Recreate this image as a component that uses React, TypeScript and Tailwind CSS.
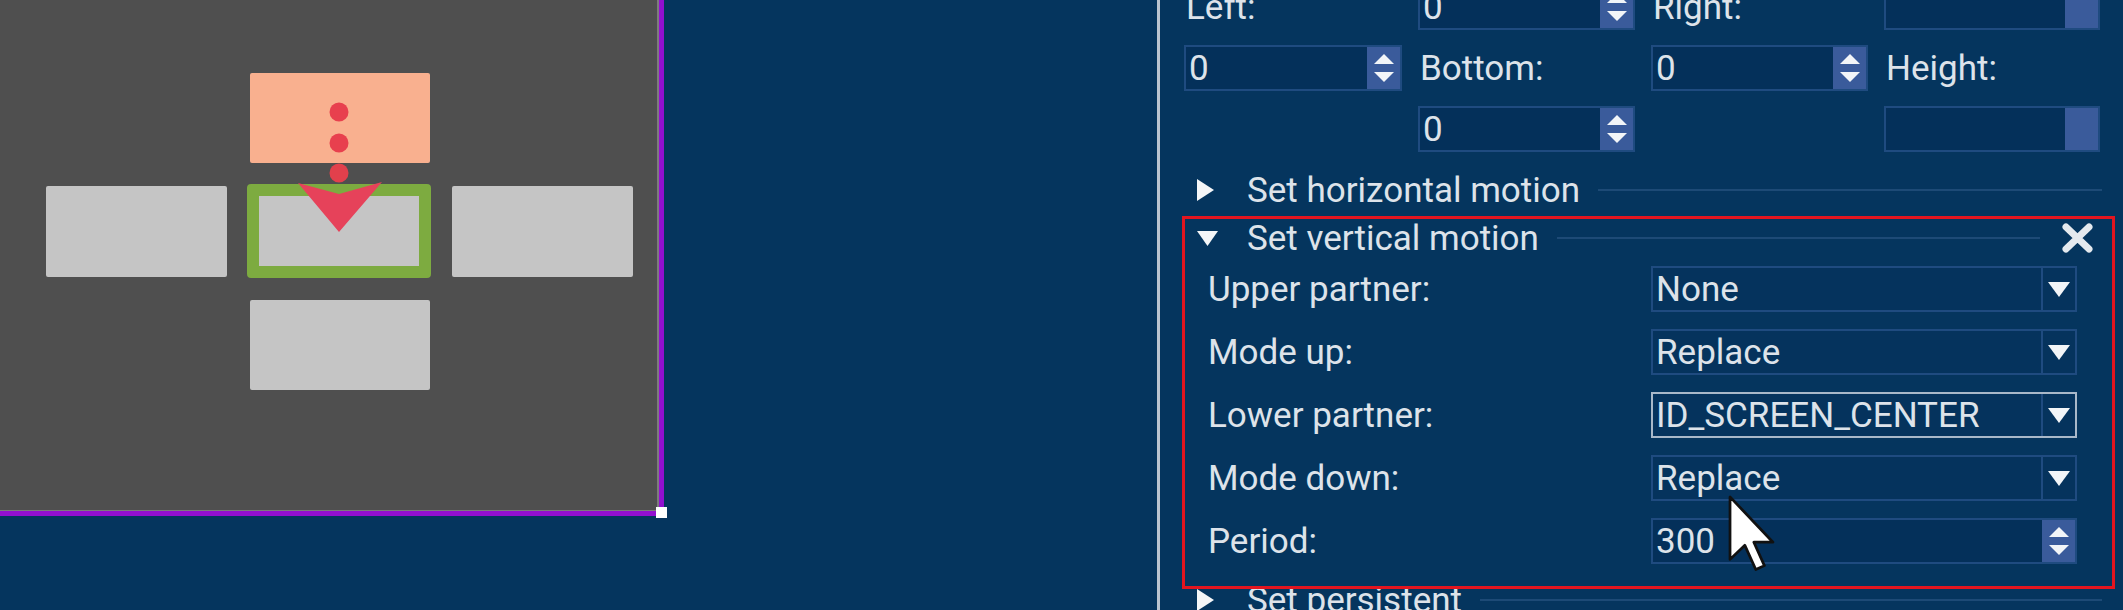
import type { ReactNode } from "react";

const TEXT = "text-[35px] leading-none text-[#dde3ea] whitespace-nowrap";

function ArrowUp() {
  return (
    <svg width="20" height="10" viewBox="0 0 20 10">
      <polygon points="10,0 20,10 0,10" fill="#f2f5f8" />
    </svg>
  );
}

function ArrowDown({ w = 20, h = 10 }: { w?: number; h?: number }) {
  return (
    <svg width={w} height={h} viewBox={`0 0 ${w} ${h}`}>
      <polygon points={`0,0 ${w},0 ${w / 2},${h}`} fill="#f2f5f8" />
    </svg>
  );
}

function SpinBox({ value, arrows = true }: { value?: string; arrows?: boolean }) {
  return (
    <div className="flex h-[46px] border-2 border-[#1f4b80] bg-[#04305a]">
      <div className={`flex flex-1 items-center pl-[3px] ${TEXT}`}>{value}</div>
      <div className="flex w-[33px] flex-col items-center justify-center gap-[8px] bg-[#3a5b9b]">
        {arrows && (
          <>
            <ArrowUp />
            <ArrowDown />
          </>
        )}
      </div>
    </div>
  );
}

function ComboBox({ value, focused = false }: { value: string; focused?: boolean }) {
  return (
    <div
      className={`flex h-[46px] border-2 bg-[#05335d] ${
        focused ? "border-[#a9b8c9]" : "border-[#1f4b80]"
      }`}
    >
      <div className={`flex flex-1 items-center pl-[3px] ${TEXT}`}>{value}</div>
      <div className="flex w-[34px] items-center justify-center border-l-2 border-[#1f4b80]">
        <ArrowDown w={22} h={15} />
      </div>
    </div>
  );
}

function Label({ children }: { children: ReactNode }) {
  return <div className={`flex items-center pl-[2px] ${TEXT}`}>{children}</div>;
}

function SectionHeader({
  title,
  open = false,
  closable = false,
}: {
  title: string;
  open?: boolean;
  closable?: boolean;
}) {
  return (
    <div className={`flex h-[40px] items-center pl-[37px] ${closable ? "pr-[30px]" : "pr-[21px]"}`}>
      <div className="flex w-[50px] items-center">
        {open ? (
          <svg width="21" height="15" viewBox="0 0 21 15">
            <polygon points="0,0 21,0 10.5,15" fill="#f4f6f8" />
          </svg>
        ) : (
          <svg width="17" height="22" viewBox="0 0 17 22">
            <polygon points="0,0 17,11 0,22" fill="#f4f6f8" />
          </svg>
        )}
      </div>
      <span className={TEXT}>{title}</span>
      <div className="ml-[18px] h-[2px] flex-1 bg-[#1d4a76]" />
      {closable && (
        <svg className="ml-[22px]" width="31" height="30" viewBox="0 0 31 30">
          <path
            d="M4 4 L27 26 M27 4 L4 26"
            stroke="#e4e9ee"
            strokeWidth="7"
            strokeLinecap="round"
          />
        </svg>
      )}
    </div>
  );
}

function FieldRow({ label, children }: { label: string; children: ReactNode }) {
  return (
    <div className="flex h-[46px] items-center pl-[48px] pr-[46px]">
      <div className={`flex-1 ${TEXT}`}>{label}</div>
      <div className="w-[426px]">{children}</div>
    </div>
  );
}

function LayoutCanvas() {
  return (
    <div className="relative w-fit border-b-[5px] border-r-[5px] border-[#9210d0]">
      <div className="relative h-[511px] w-[659px] border-b border-r-2 border-[#7c7c7c] bg-[#4f4f4f]">
        <div className="absolute left-[250px] top-[73px] h-[90px] w-[180px] rounded-[2px] bg-[#f9b08f]" />
        <div className="absolute left-[46px] top-[186px] h-[91px] w-[181px] rounded-[2px] bg-[#c5c5c5]" />
        <div className="absolute left-[452px] top-[186px] h-[91px] w-[181px] rounded-[2px] bg-[#c5c5c5]" />
        <div className="absolute left-[247px] top-[184px] h-[94px] w-[184px] rounded-[4px] border-[12px] border-[#7dab40] bg-[#c5c5c5]" />
        <div className="absolute left-[250px] top-[300px] h-[90px] w-[180px] rounded-[2px] bg-[#c5c5c5]" />
        <svg className="absolute left-0 top-0" width="657" height="510" viewBox="0 0 657 510">
          <circle cx="339" cy="112" r="9.5" fill="#e8404e" />
          <circle cx="339" cy="143" r="9.5" fill="#e8404e" />
          <circle cx="339" cy="173" r="9.5" fill="#e2404c" />
          <polygon points="298,183 339,194 382,182 339,232" fill="#e6425a" />
        </svg>
      </div>
      <div className="absolute left-[656px] top-[507px] h-[11px] w-[11px] bg-white" />
    </div>
  );
}

export default function App() {
  return (
    <div className="relative flex h-[610px] w-[2123px] overflow-hidden bg-[#05355e] font-['Roboto','Liberation_Sans',sans-serif]">
      <div className="w-[1157px] shrink-0">
        <LayoutCanvas />
      </div>

      <div className="flex flex-1 flex-col border-l-[3px] border-[#bac4cf]">
        <div className="mt-[-16px] grid auto-rows-[46px] grid-cols-[218px_217px_217px_216px] gap-x-[16px] gap-y-[15px] pl-[24px]">
          <Label>Left:</Label>
          <SpinBox value="0" />
          <Label>Right:</Label>
          <SpinBox arrows={false} />

          <SpinBox value="0" />
          <Label>Bottom:</Label>
          <SpinBox value="0" />
          <Label>Height:</Label>

          <div />
          <SpinBox value="0" />
          <div />
          <SpinBox arrows={false} />
        </div>

        <div className="mt-[18px]">
          <SectionHeader title="Set horizontal motion" />
        </div>

        <div className="relative mt-[8px]">
          <SectionHeader title="Set vertical motion" open closable />
          <div className="mt-[8px] flex flex-col gap-[17px]">
            <FieldRow label="Upper partner:">
              <ComboBox value="None" />
            </FieldRow>
            <FieldRow label="Mode up:">
              <ComboBox value="Replace" />
            </FieldRow>
            <FieldRow label="Lower partner:">
              <ComboBox value="ID_SCREEN_CENTER" focused />
            </FieldRow>
            <FieldRow label="Mode down:">
              <ComboBox value="Replace" />
            </FieldRow>
            <FieldRow label="Period:">
              <SpinBox value="300" />
            </FieldRow>
          </div>
          <div className="pointer-events-none absolute -bottom-[25px] -top-[2px] left-[22px] right-[8px] border-[3px] border-[#e3151f]" />
        </div>

        <div className="mt-[16px]">
          <SectionHeader title="Set persistent" />
        </div>
      </div>

      <svg
        className="pointer-events-none absolute left-[1726px] top-[493px]"
        width="51"
        height="82"
        viewBox="0 0 13 21"
      >
        <path
          d="M1 1 L1 17 L4.8 13.4 L7.6 19.6 L9.8 18.6 L7.1 12.6 L12 12.6 Z"
          fill="#ffffff"
          stroke="#111111"
          strokeWidth="0.7"
          strokeLinejoin="round"
        />
      </svg>
    </div>
  );
}
